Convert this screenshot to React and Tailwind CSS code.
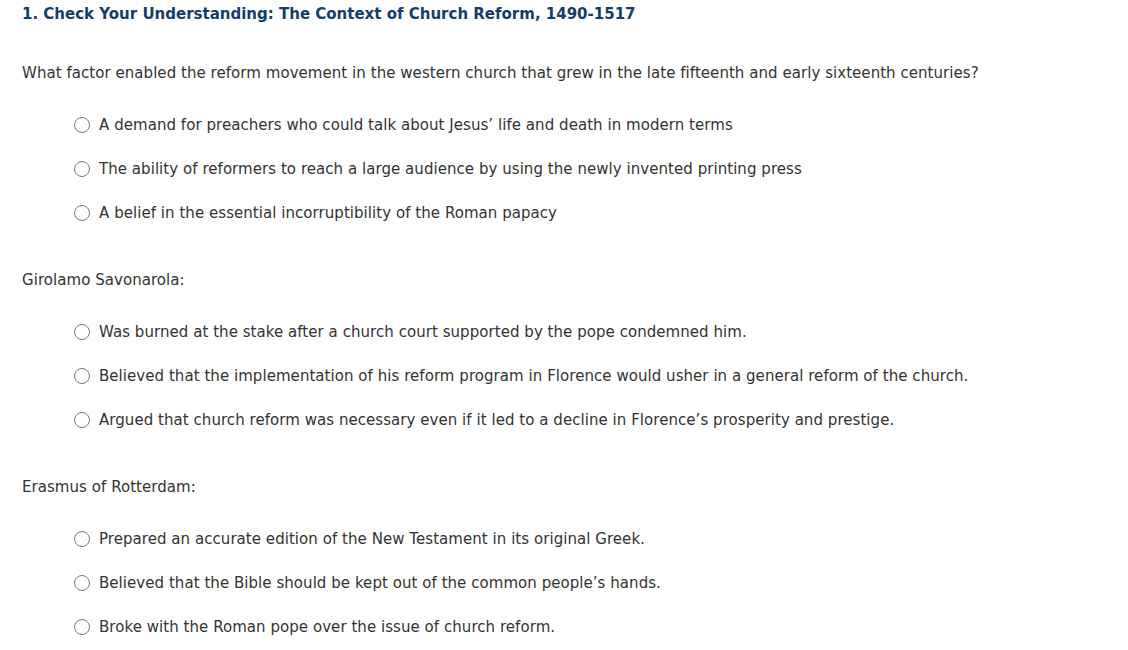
import React from "react";

const questions = [
  {
    q: "What factor enabled the reform movement in the western church that grew in the late fifteenth and early sixteenth centuries?",
    options: [
      "A demand for preachers who could talk about Jesus\u2019 life and death in modern terms",
      "The ability of reformers to reach a large audience by using the newly invented printing press",
      "A belief in the essential incorruptibility of the Roman papacy",
    ],
  },
  {
    q: "Girolamo Savonarola:",
    options: [
      "Was burned at the stake after a church court supported by the pope condemned him.",
      "Believed that the implementation of his reform program in Florence would usher in a general reform of the church.",
      "Argued that church reform was necessary even if it led to a decline in Florence\u2019s prosperity and prestige.",
    ],
  },
  {
    q: "Erasmus of Rotterdam:",
    options: [
      "Prepared an accurate edition of the New Testament in its original Greek.",
      "Believed that the Bible should be kept out of the common people\u2019s hands.",
      "Broke with the Roman pope over the issue of church reform.",
    ],
  },
];

export default function App() {
  return (
    <div className="w-[1128px] h-[650px] bg-white overflow-hidden text-[#333333] text-[15px] px-[22px] pt-px" style={{ fontFamily: '"DejaVu Sans", Verdana, sans-serif' }}>
      <h1 className="font-bold text-[#133d6b] text-[15px] leading-[26px]">
        1. Check Your Understanding: The Context of Church Reform, 1490-1517
      </h1>
      <div className="pt-[33px]">
        {questions.map((item, i) => (
          <div key={i} className="mb-[41px] tracking-[0.05px]">
            <p className="leading-[26px]">{item.q}</p>
            <div className="pt-[26px] pl-[52px] flex flex-col gap-[18px]">
              {item.options.map((o, j) => (
                <label key={j} className="flex items-center gap-[9px] leading-[26px]">
                  <span className="w-[16px] h-[16px] rounded-full border border-[#7a7a7a] bg-white shrink-0" />
                  <span>{o}</span>
                </label>
              ))}
            </div>
          </div>
        ))}
      </div>
    </div>
  );
}
